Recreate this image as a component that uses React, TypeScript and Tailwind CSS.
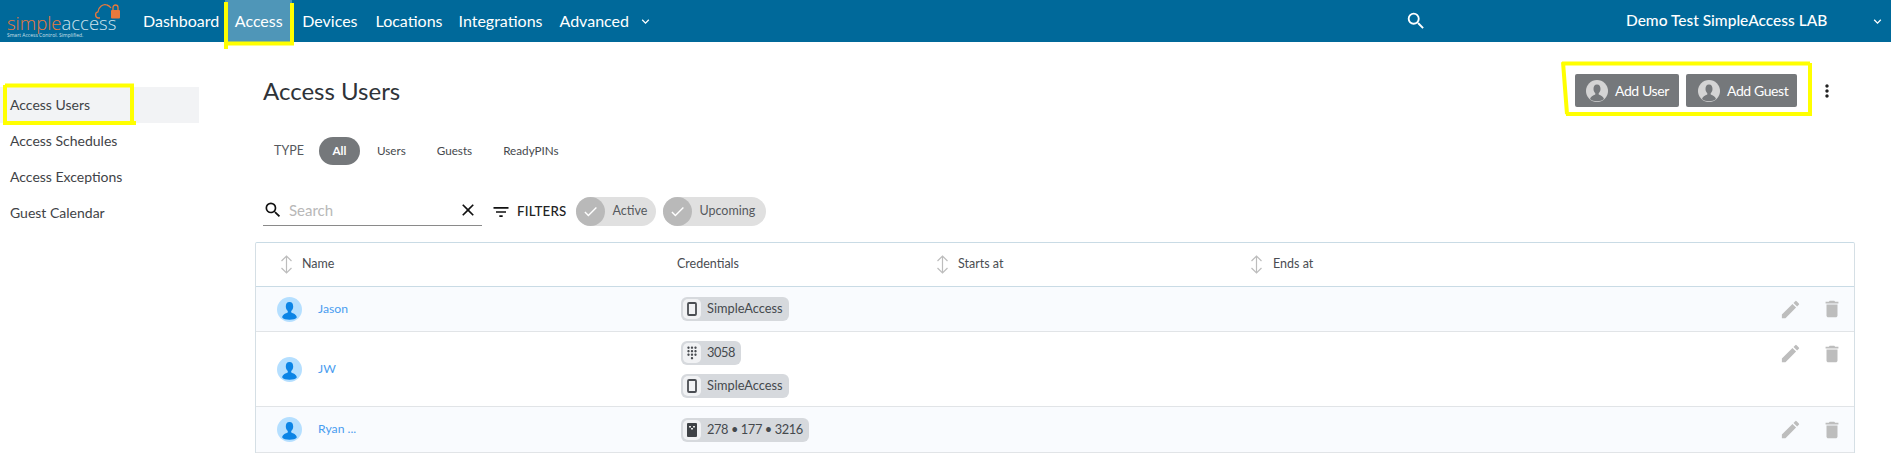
import { MdSearch, MdClose, MdFilterList, MdMoreVert, MdEdit, MdDelete, MdKeyboardArrowDown, MdDialpad, MdCheck } from 'react-icons/md'
import type { ReactNode } from 'react'

const navItems = [
  { label: 'Dashboard', cls: 'ml-[25px] px-0' },
  { label: 'Access', active: true, cls: 'ml-[6px] w-[67px] justify-center' },
  { label: 'Devices', cls: 'ml-[10px]' },
  { label: 'Locations', cls: 'ml-[18px]' },
  { label: 'Integrations', cls: 'ml-[16px]' },
  { label: 'Advanced', cls: 'ml-[17px]' },
]

function Logo() {
  return (
    <div className="relative h-[42px] w-[118px] shrink-0 pl-[7px]">
      <div className="pt-[13px] font-['Open_Sans',sans-serif] text-[18.5px] leading-[20px] font-light whitespace-nowrap text-[#cfe3ee]">
        <span className="text-[#e8793c]">simple</span>access
      </div>
      <div className="font-['Open_Sans',sans-serif] text-[5px] leading-[5px] whitespace-nowrap text-[#cfe0ea]">Smart Access Control. Simplified.</div>
      <svg className="absolute top-[3px] left-[94px]" width="26" height="16" viewBox="0 0 26 16" fill="none">
        <path d="M6 15 H4.500 C1 15 0.500 9.500 4 8.800 C4.500 4 9 0.500 13 2 C15 2.500 16 3.500 17 5" stroke="#e8793c" strokeWidth="1.300" />
        <path d="M19 7 V4.500 A2.500 2.500 0 0 1 24 4.500 V7" stroke="#e8793c" strokeWidth="1.300" />
        <rect x="17" y="7" width="9" height="8.500" rx="1" fill="#e8793c" />
      </svg>
    </div>
  )
}

function Header() {
  return (
    <header className="flex h-[42px] items-center bg-[#00699a] text-[16px] text-white">
      <Logo />
      {navItems.map((item) => (
        <div key={item.label} className={`flex h-full items-center ${item.cls} ${item.active ? 'bg-[#4f96b8]' : ''}`}>
          {item.label}
        </div>
      ))}
      <MdKeyboardArrowDown className="ml-[9px] text-[15px]" />
      <MdSearch className="ml-[752px] text-[22px]" />
      <div className="ml-[199px] text-[15.5px] font-medium whitespace-nowrap">Demo Test SimpleAccess LAB</div>
      <MdKeyboardArrowDown className="ml-[43px] text-[15px]" />
    </header>
  )
}

function Sidebar() {
  const items = ['Access Users', 'Access Schedules', 'Access Exceptions', 'Guest Calendar']
  return (
    <aside className="w-[199px] shrink-0 pt-[45px] text-[14px] text-[#3f4347]">
      {items.map((item, i) => (
        <div key={item} className={`flex h-[36px] items-center pb-[1px] pl-[10px] ${i === 0 ? 'bg-[#f2f3f5]' : ''}`}>
          {item}
        </div>
      ))}
    </aside>
  )
}

function AvatarIcon() {
  return (
    <svg width="22" height="22" viewBox="0 0 22 22" className="shrink-0">
      <circle cx="11" cy="11" r="11" fill="#d4d4d4" />
      <path d="M11 4.500 C8.500 4.500 7.500 6.500 7.500 9 C7.500 11 8.500 12.500 9.300 13.300 V14.500 C7 15.500 4.500 16.500 4 19 C7 22 15 22 18 19 C17.500 16.500 15 15.500 12.700 14.500 V13.300 C13.500 12.500 14.500 11 14.500 9 C14.500 6.500 13.500 4.500 11 4.500 Z" fill="#75787b" />
    </svg>
  )
}

function AddButton({ label, guest, cls }: { label: string; guest?: boolean; cls: string }) {
  return (
    <button className={`relative flex h-[33px] items-center rounded-[2px] bg-[#75787b] text-white ${cls}`}>
      <AvatarIcon />
      <span className={guest ? 'ml-[5px] text-[13.5px] tracking-[-0.8px]' : 'ml-[7px] text-[14px] tracking-[-0.4px]'}>{label}</span>
      {guest && (
        <svg className="absolute top-[18px] left-[10px]" width="11" height="11" viewBox="0 0 11 11" fill="#75787b" stroke="#d4d4d4">
          <circle cx="5.500" cy="5.500" r="4.500" />
          <path d="M5.500 3 V5.800 H8" fill="none" />
        </svg>
      )}
    </button>
  )
}

function StatusChip({ label, cls }: { label: string; cls: string }) {
  return (
    <div className={`flex h-[29px] items-center rounded-full bg-[#e0e0e0] text-[12.5px] text-[#55595d] ${cls}`}>
      <span className="flex h-[29px] w-[29px] items-center justify-center rounded-full bg-[#b9b9b9]">
        <MdCheck className="text-[17px] text-white" />
      </span>
      <span className="ml-[7px]">{label}</span>
    </div>
  )
}

function SortIcon() {
  return (
    <svg width="13" height="19" viewBox="0 0 13 19" fill="none" stroke="#bdbdbd" strokeWidth="1.200" className="shrink-0">
      <path d="M6.500 1 V18 M1.500 6 L6.500 1 L11.500 6 M1.500 13 L6.500 18 L11.500 13" />
    </svg>
  )
}

function UserIcon() {
  return (
    <svg width="25" height="25" viewBox="0 0 25 25" className="shrink-0">
      <circle cx="12.500" cy="12.500" r="12.500" fill="#b5dfff" />
      <path d="M12.500 5 C9.800 5 8.800 7 8.800 9.500 C8.800 11.500 9.800 13.200 10.800 14 V15.500 C9 16.500 5.500 17 5.200 20.500 C7 23.500 18 23.500 19.800 20.500 C19.500 17 16 16.500 14.200 15.500 V14 C15.200 13.200 16.200 11.500 16.200 9.500 C16.200 7 15.200 5 12.500 5 Z" fill="#0b84e6" />
    </svg>
  )
}

function PhoneGlyph() {
  return (
    <svg width="10" height="14" viewBox="0 0 10 14" fill="none">
      <rect x="1" y="1" width="8" height="12" rx="1" stroke="#4a4d52" strokeWidth="1.800" />
    </svg>
  )
}

function RemoteGlyph() {
  return (
    <svg width="10" height="14" viewBox="0 0 10 14">
      <rect width="10" height="14" rx="1" fill="#3f4246" />
      <path d="M2 3 H4 V4.500 H2 Z M6 3 H8 V4.500 H6 Z M4 5 H6 V6.500 H4 Z" fill="#e8e8e8" />
    </svg>
  )
}

function Credential({ icon, label, digits }: { icon: ReactNode; label: string; digits?: boolean }) {
  return (
    <div className={`flex h-[24px] w-fit items-center rounded-[6px] bg-[#d6d9dd] pr-[6px] pl-[2px] text-[12.8px] text-[#45494d] ${digits ? 'tracking-[-0.4px]' : ''}`}>
      <span className="mr-[6px] flex h-[20px] w-[18px] items-center justify-center rounded-[5px] bg-[#f1f2f4]">{icon}</span>
      {label}
    </div>
  )
}

function Row({ name, tall, shaded, last, children }: { name: ReactNode; tall?: boolean; shaded?: boolean; last?: boolean; children: ReactNode }) {
  return (
    <div className={`grid grid-cols-[421px_1fr_auto] items-center border-b ${last ? 'h-[46px]' : tall ? 'h-[75px]' : 'h-[45px]'} ${shaded ? 'bg-[#f9fbfe]' : 'bg-white'} border-[#e1e4e7]`}>
      <div className="flex items-center pl-[21px] text-[12.2px] text-[#4a9df0]">
        <UserIcon />
        <span className="ml-[16px]">{name}</span>
      </div>
      <div className="flex flex-col gap-[9px] pl-[4px]">{children}</div>
      <div className={`flex items-center gap-[19px] pr-[11px] text-[#bdbdbd] ${tall ? 'self-start pt-[10px]' : ''}`}>
        <MdEdit className="text-[23px]" />
        <MdDelete className="text-[22px]" />
      </div>
    </div>
  )
}

function UsersTable() {
  return (
    <div className="mt-[16px] ml-[-8px] w-[1600px] rounded-t-[2px] border-x border-t border-x-[#d5dfe5] border-t-[#c9dbe5]">
      <div className="grid h-[44px] grid-cols-[421px_259px_314px_1fr] items-center border-b border-[#c9dbe5] text-[12.5px] text-[#4a4d52]">
        <div className="flex items-center gap-[9px] pl-[24px]">
          <SortIcon />
          Name
        </div>
        <div>Credentials</div>
        <div className="flex items-center gap-[9px]">
          <SortIcon />
          Starts at
        </div>
        <div className="flex items-center gap-[10px]">
          <SortIcon />
          Ends at
        </div>
      </div>
      <Row name="Jason" shaded>
        <Credential icon={<PhoneGlyph />} label="SimpleAccess" />
      </Row>
      <Row name="JW" tall>
        <Credential icon={<MdDialpad className="text-[14px] text-[#4a4d52]" />} label="3058" digits />
        <Credential icon={<PhoneGlyph />} label="SimpleAccess" />
      </Row>
      <Row name="Ryan ..." shaded last>
        <Credential icon={<RemoteGlyph />} label="278 • 177 • 3216" digits />
      </Row>
    </div>
  )
}

function Annotations() {
  // the yellow marker strokes someone drew over the screenshot
  return (
    <svg className="pointer-events-none absolute top-0 left-0" width="1891" height="453" fill="none" stroke="#ffff00" strokeWidth="4">
      <path d="M226 2 V49 M292 3 V45 M226 43.500 H294" />
      <path d="M5 85 V125 M5 85.500 H134 M132 85 V123 M5 123 H136" />
      <path d="M1563 62 L1567 114 M1562 63.500 H1810 M1810 63 V113 M1566 114 H1812" />
    </svg>
  )
}

export default function App() {
  return (
    <div className="relative h-[453px] w-[1891px] overflow-hidden bg-white font-['Lato',sans-serif]">
      <Header />
      <div className="flex">
        <Sidebar />
        <main className="min-w-0 flex-1 pl-[64px]">
          <div className="flex h-[65px] items-center justify-between pt-[32px]">
            <h1 className="text-[24px] text-[#2f3338]">Access Users</h1>
            <div className="flex items-center">
              <AddButton label="Add User" cls="w-[104px] pl-[11px]" />
              <AddButton label="Add Guest" cls="ml-[7px] w-[111px] pl-[12px]" />
              <MdMoreVert className="mr-[54px] ml-[20px] text-[20px] text-[#222]" />
            </div>
          </div>
          <div className="mt-[30px] flex h-[28px] items-center text-[11.7px] text-[#45494d]">
            <span className="ml-[11px] text-[12.5px] text-[#55595d]">TYPE</span>
            <span className="ml-[15px] flex h-[28px] w-[41px] items-center justify-center rounded-full bg-[#75787b] font-bold text-white">All</span>
            <span className="ml-[17px]">Users</span>
            <span className="ml-[31px]">Guests</span>
            <span className="ml-[31px]">ReadyPINs</span>
          </div>
          <div className="mt-[32px] flex h-[29px] items-center">
            <div className="flex h-[29px] w-[219px] items-center border-b border-[#8a8a8a] pr-[4px] pb-[2px]">
              <MdSearch className="text-[20px] text-[#111]" />
              <span className="ml-[6px] flex-1 text-[15px] text-[#b8b8b8]">Search</span>
              <MdClose className="text-[20px] text-[#111]" />
            </div>
            <MdFilterList className="ml-[9px] text-[20px] text-[#111]" />
            <span className="ml-[6px] text-[13.3px] font-medium tracking-[0.2px] text-[#222]">FILTERS</span>
            <StatusChip label="Active" cls="ml-[10px] w-[80px]" />
            <StatusChip label="Upcoming" cls="ml-[7px] w-[103px]" />
          </div>
          <UsersTable />
        </main>
      </div>
      <Annotations />
    </div>
  )
}
